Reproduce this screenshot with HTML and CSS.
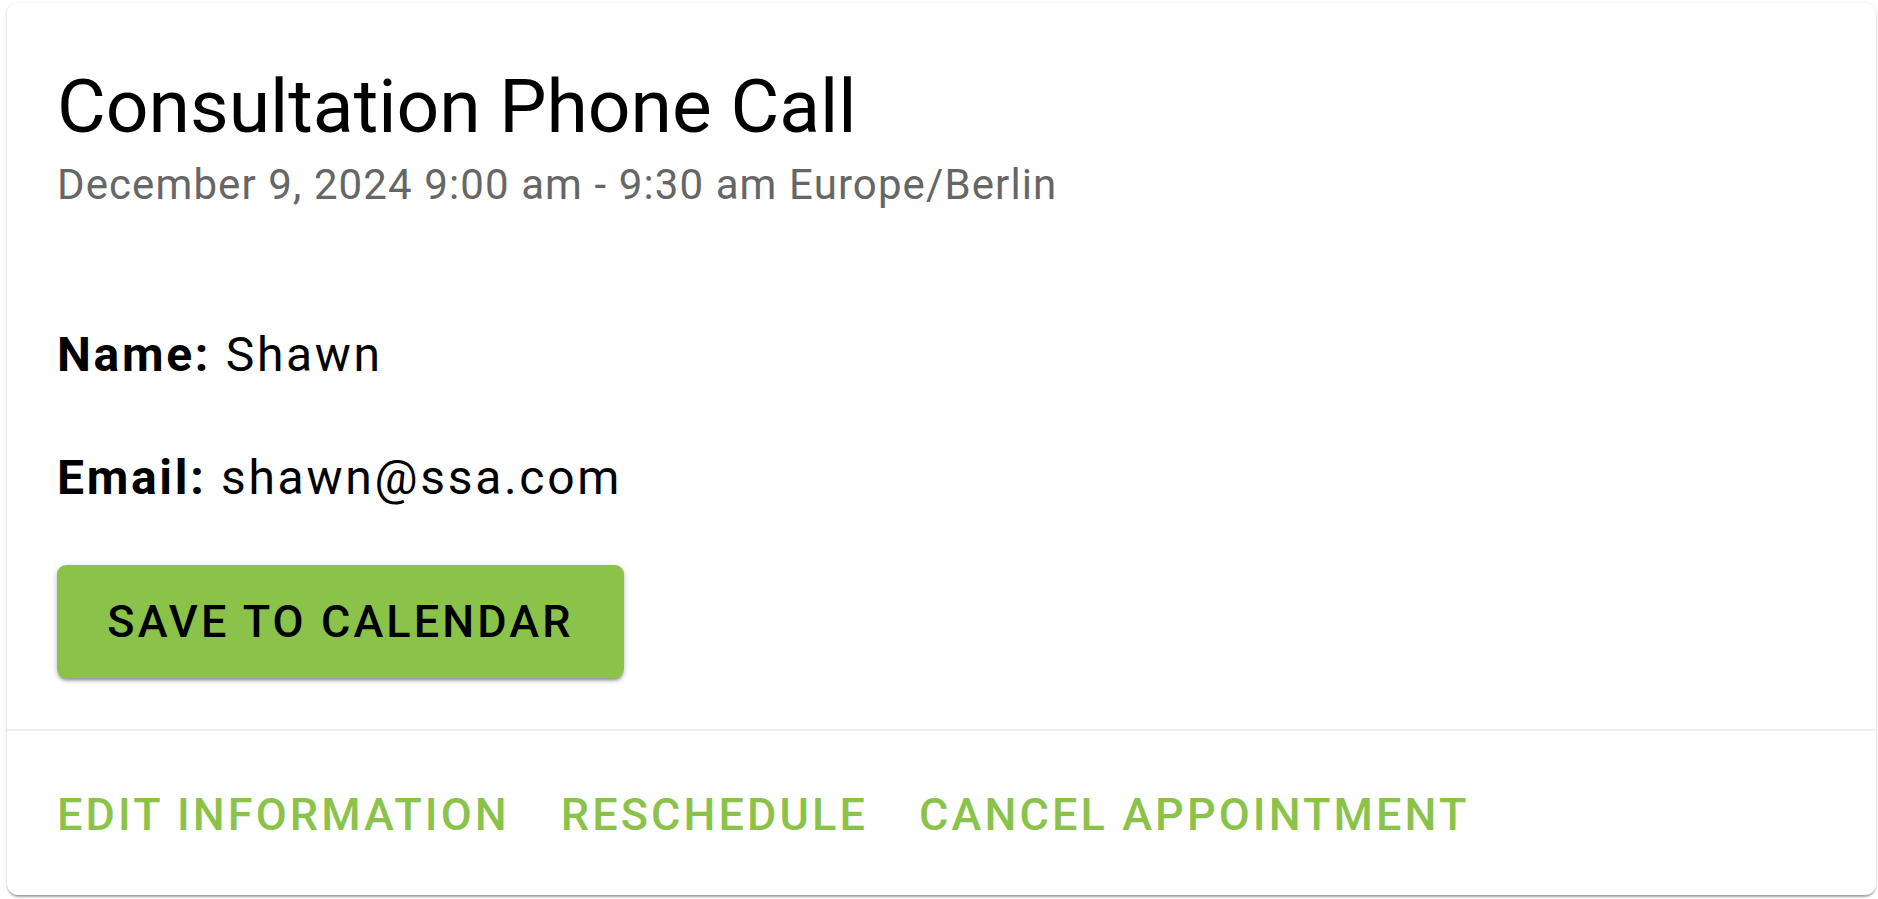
FILE: index.html
```html
<!DOCTYPE html>
<html lang="en">
<head>
<meta charset="utf-8">
<title>Consultation Phone Call</title>
<link rel="stylesheet" href="styles.css">
</head>
<body>
<div class="card">
  <div class="card-body">
    <h1 class="title">Consultation Phone Call</h1>
    <div class="subtitle">December 9, 2024 9:00 am - 9:30 am Europe/Berlin</div>
    <p class="field field-first"><strong>Name:</strong> Shawn</p>
    <p class="field"><strong>Email:</strong> shawn@ssa.com</p>
    <button class="btn-save" type="button">Save to calendar</button>
  </div>
  <div class="card-actions">
    <a class="action" href="#">Edit information</a>
    <a class="action" href="#">Reschedule</a>
    <a class="action" href="#">Cancel appointment</a>
  </div>
</div>
</body>
</html>
```

FILE: styles.css
```css
html, body {
  margin: 0;
  padding: 0;
  background: #ffffff;
}
body {
  padding: 3px 2px 4px 7px;
  font-family: Roboto, "Liberation Sans", sans-serif;
  color: #000;
}
.card {
  background: #fff;
  border-radius: 11px;
  box-shadow: 0 3px 2px -1px rgba(0,0,0,.25), 0 1px 2px 0 rgba(0,0,0,.14), 0 1px 5px 0 rgba(0,0,0,.10);
  overflow: hidden;
}
.card-body {
  padding: 58px 50px 51px 50px;
  display: flex;
  flex-direction: column;
  align-items: flex-start;
}
.title {
  margin: 0;
  font-size: 75px;
  line-height: 90px;
  font-weight: 400;
  letter-spacing: 0;
}
.subtitle {
  margin-top: 9px;
  font-size: 42px;
  line-height: 50px;
  color: #666666;
  letter-spacing: 1.1px;
}
.field {
  margin: 51px 0 0 0;
  font-size: 48px;
  line-height: 72px;
  letter-spacing: 2.7px;
}
.field-first {
  margin-top: 109px;
}
.field strong {
  font-weight: 700;
  letter-spacing: 2.7px;
}
.btn-save {
  margin-top: 51px;
  height: 113px;
  width: 567px;
  border: 0;
  border-radius: 9px;
  background: #8bc34a;
  color: #000;
  font-family: Roboto, "Liberation Sans", sans-serif;
  font-size: 45px;
  font-weight: 500;
  line-height: 45px;
  letter-spacing: 3.1px;
  text-transform: uppercase;
  padding: 0;
  display: flex;
  align-items: center;
  justify-content: center;
  box-shadow: 0 4px 3px -2px rgba(0,0,0,.28), 0 3px 4px 0 rgba(0,0,0,.14), 0 1px 8px 0 rgba(0,0,0,.12);
}
.card-actions {
  border-top: 2px solid #eeeeee;
  padding: 61px 50px 58px 50px;
  display: flex;
  gap: 51px;
}
.action {
  font-size: 45px;
  line-height: 45px;
  font-weight: 500;
  letter-spacing: 3.1px;
  text-transform: uppercase;
  color: #8bc34a;
  text-decoration: none;
}
```
